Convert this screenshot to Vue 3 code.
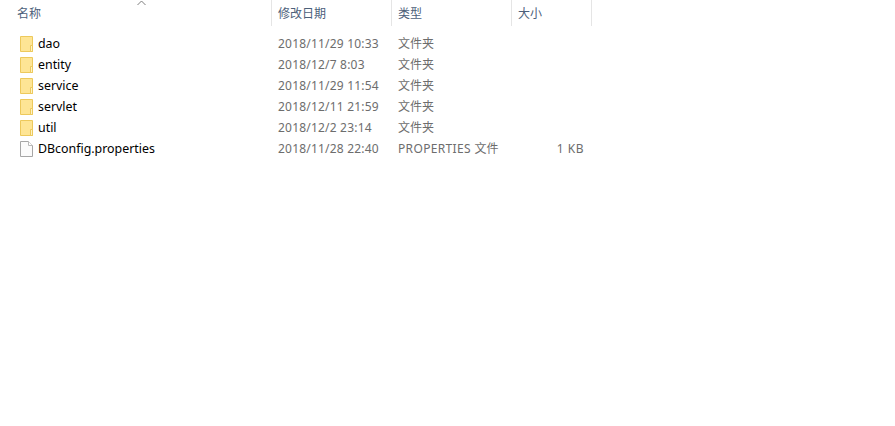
<script setup>
const rows = [
  { name: 'dao', date: '2018/11/29 10:33', type: '文件夹', latin: '', size: '', file: false },
  { name: 'entity', date: '2018/12/7 8:03', type: '文件夹', latin: '', size: '', file: false },
  { name: 'service', date: '2018/11/29 11:54', type: '文件夹', latin: '', size: '', file: false },
  { name: 'servlet', date: '2018/12/11 21:59', type: '文件夹', latin: '', size: '', file: false },
  { name: 'util', date: '2018/12/2 23:14', type: '文件夹', latin: '', size: '', file: false },
  { name: 'DBconfig.properties', date: '2018/11/28 22:40', type: '文件', latin: 'PROPERTIES ', size: '1 KB', file: true },
]
</script>

<template>
  <div class="page">
    <div class="header">
      <div class="hcell name-col">
        名称
        <svg class="sort" width="10" height="6" viewBox="0 0 10 6"><path d="M0.5 5 L4.5 1 L8.5 5" fill="none" stroke="#7f7f7f" stroke-width="1" /></svg>
      </div>
      <div class="hcell date-col">修改日期</div>
      <div class="hcell type-col">类型</div>
      <div class="hcell size-col">大小</div>
    </div>
    <div class="list">
      <div v-for="r in rows" :key="r.name" class="row">
        <div class="cell name-cell">
          <svg v-if="!r.file" class="icon" width="16" height="16" viewBox="0 0 16 16">
            <path d="M2.5 0.5 H14.5 V15.5 H2.5 Z" fill="#fee595" stroke="#edc95c" />
            <path d="M12.5 15.5 V9.5 H14.5 V15.5 Z" fill="#fff3c4" stroke="#edc95c" />
          </svg>
          <svg v-else class="icon" width="16" height="16" viewBox="0 0 16 16">
            <path d="M2.5 0.5 H10.5 L14.5 4.5 V15.5 H2.5 Z" fill="#fbfbfb" stroke="#a6a6a6" />
            <path d="M10.5 0.5 V4.5 H14.5" fill="#fff" stroke="#b8b8b8" />
          </svg>
          <span class="fname">{{ r.name }}</span>
        </div>
        <div class="cell date-cell">{{ r.date }}</div>
        <div class="cell type-cell"><span class="latin">{{ r.latin }}</span>{{ r.type }}</div>
        <div class="cell size-cell">{{ r.size }}</div>
      </div>
    </div>
  </div>
</template>

<style scoped>
.page {
  width: 895px;
  height: 426px;
  background: #fff;
  overflow: hidden;
  font-family: "Noto Sans", "Noto Sans CJK SC", sans-serif;
  font-size: 12px;
}
.header {
  display: flex;
  height: 26px;
}
.hcell {
  position: relative;
  box-sizing: border-box;
  color: #4c607a;
  line-height: 24px;
  padding-top: 2px;
  padding-left: 6px;
  border-right: 1px solid #e5e5e5;
}
.name-col {
  width: 272px;
  padding-left: 17px;
}
.date-col,
.type-col {
  width: 120px;
}
.size-col {
  width: 80px;
}
.sort {
  position: absolute;
  left: 137px;
  top: 0;
}
.list {
  padding-top: 7px;
}
.row {
  display: flex;
  height: 21px;
  align-items: center;
}
.cell {
  box-sizing: border-box;
  color: #6d6d6d;
  line-height: 21px;
  white-space: nowrap;
}
.name-cell {
  width: 272px;
  padding-left: 18px;
  display: flex;
  align-items: center;
  gap: 4px;
}
.icon {
  flex: none;
}
.fname {
  color: #000;
  font-size: 12.4px;
}
.date-cell,
.type-cell {
  width: 120px;
  padding-left: 6px;
}
.date-cell {
  letter-spacing: 0.2px;
}
.latin {
  letter-spacing: 0.35px;
}
.size-cell {
  width: 72px;
  text-align: right;
  letter-spacing: 0.5px;
}
</style>

<style>
html, body { background: #fff; }
</style>
